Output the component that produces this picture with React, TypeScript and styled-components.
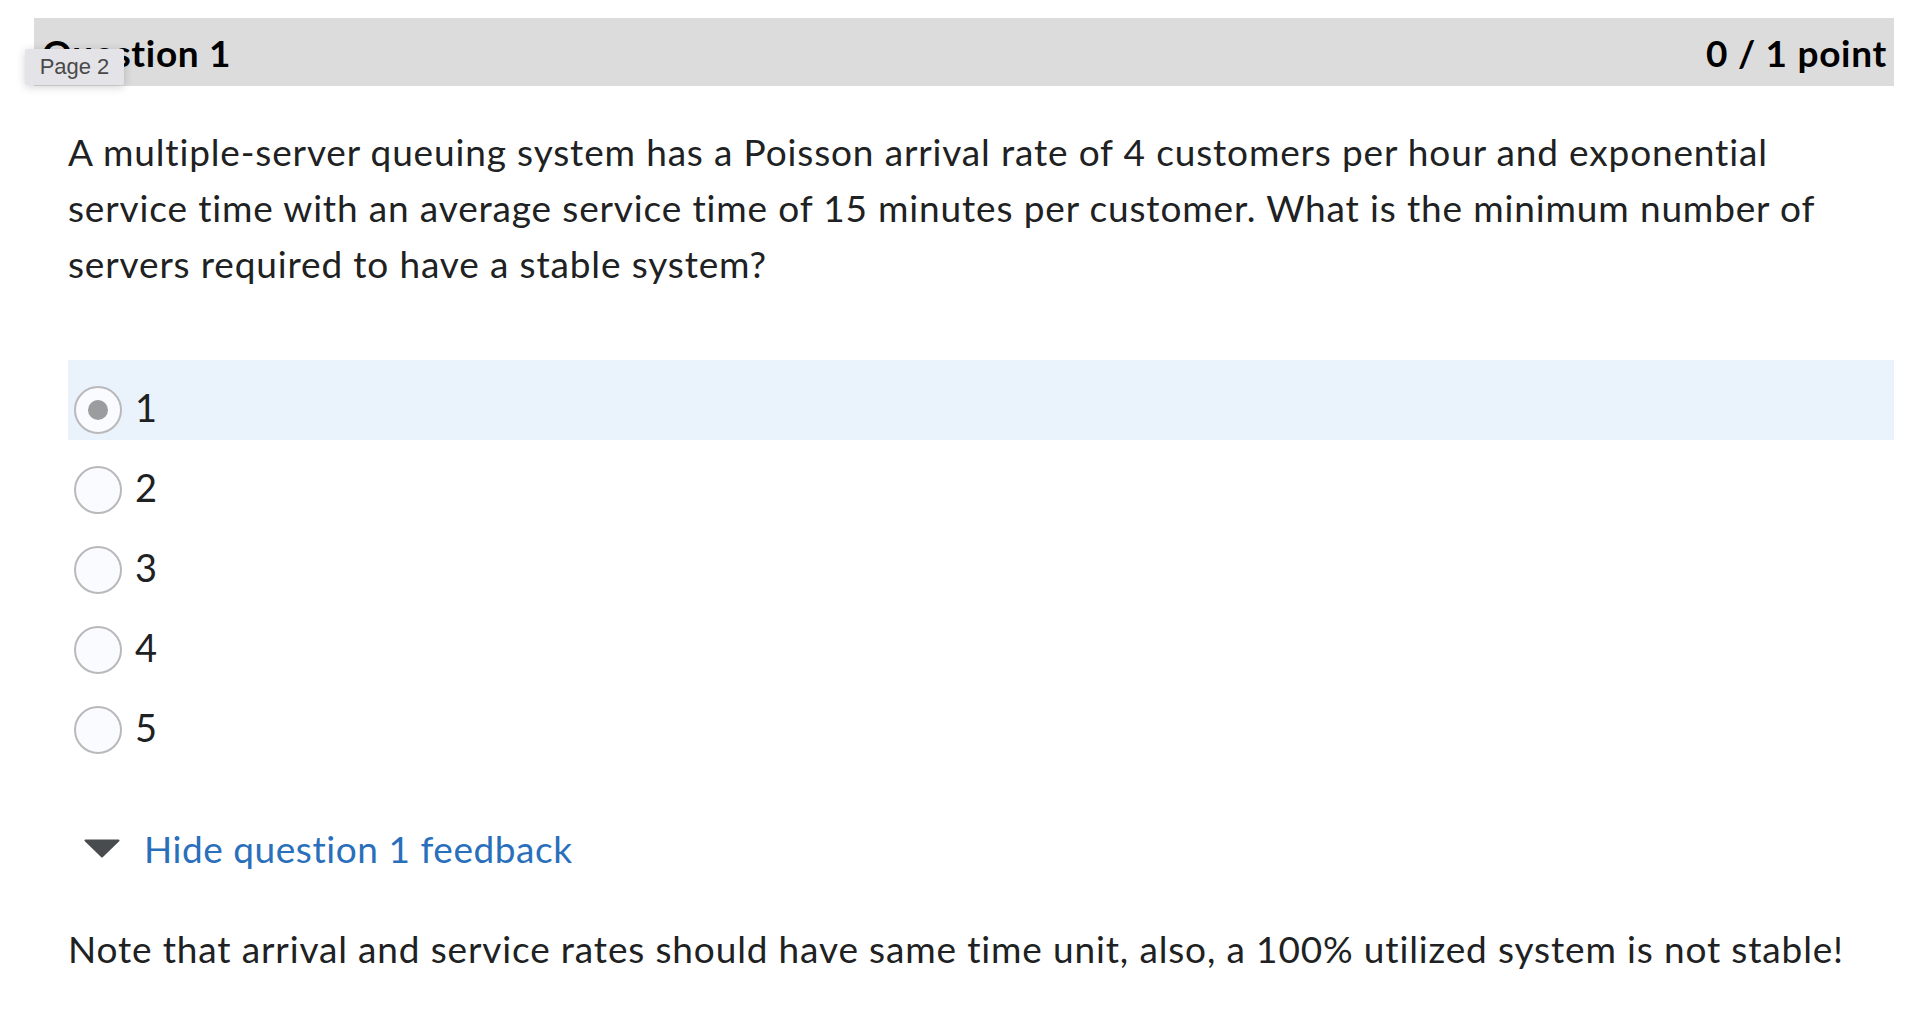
import React from "react";
import styled, { createGlobalStyle } from "styled-components";

const GlobalStyle = createGlobalStyle`
  html, body {
    margin: 0;
    padding: 0;
    background: #ffffff;
  }
  body {
    font-family: "Lato", "Noto Sans", sans-serif;
    color: #202122;
  }
`;

const Page = styled.div`
  position: relative;
  padding: 18px 12px 40px 34px;
`;

const Header = styled.div`
  display: flex;
  justify-content: space-between;
  align-items: center;
  height: 68px;
  padding: 0 7px 0 8px;
  background: #dcdcdc;
  font-family: "Lato", sans-serif;
  font-weight: 700;
  font-size: 37px;
  letter-spacing: 0.7px;
  color: #000;
`;

const PageTag = styled.div`
  position: absolute;
  left: 25px;
  top: 49px;
  width: 99px;
  height: 36px;
  display: flex;
  align-items: center;
  justify-content: center;
  background: #e4e3e8;
  border-radius: 2px;
  box-shadow: 0 2px 10px rgba(0, 0, 0, 0.18);
  font-family: "Liberation Sans", "Noto Sans", sans-serif;
  font-size: 22px;
  color: #494949;
`;

const Body = styled.div`
  padding-left: 34px;
`;

const Question = styled.p`
  margin: 38px 0 68px;
  padding-right: 20px;
  font-size: 37px;
  letter-spacing: 0.85px;
  line-height: 56px;
  color: #202122;
`;

const Options = styled.div`
  display: flex;
  flex-direction: column;
`;

const OptionRow = styled.label<{ $selected?: boolean }>`
  box-sizing: border-box;
  display: flex;
  align-items: center;
  gap: 13px;
  height: 80px;
  padding: 20px 0 0 6px;
  background: ${(p) => (p.$selected ? "#eaf2fb" : "transparent")};
  font-size: 38px;
  color: #202122;
`;

const OptionText = styled.span`
  margin-bottom: 6px;
`;

const Radio = styled.span<{ $checked?: boolean }>`
  box-sizing: border-box;
  width: 48px;
  height: 48px;
  border-radius: 50%;
  border: 2px solid #b9b9bb;
  background: #f9fbfe;
  display: flex;
  align-items: center;
  justify-content: center;

  &::after {
    content: "";
    display: ${(p) => (p.$checked ? "block" : "none")};
    width: 20px;
    height: 20px;
    border-radius: 50%;
    background: #9b9c9e;
  }
`;

const Toggle = styled.div`
  display: flex;
  align-items: center;
  gap: 24px;
  margin: 63px 0 0 16px;
  height: 50px;
`;

const ToggleLink = styled.a`
  font-size: 37px;
  letter-spacing: 0.55px;
  color: #2a6fbb;
  text-decoration: none;
`;

const Feedback = styled.p`
  margin: 48px 0 0;
  font-size: 37px;
  letter-spacing: 0.85px;
  line-height: 56px;
  color: #202122;
`;

const answers = ["1", "2", "3", "4", "5"];

export default function App() {
  return (
    <>
      <GlobalStyle />
      <Page>
        <Header>
          <span>Question 1</span>
          <span>0 / 1 point</span>
        </Header>
        <PageTag>Page 2</PageTag>
        <Body>
          <Question>
            A multiple-server queuing system has a Poisson arrival rate of 4
            customers per hour and exponential service time with an average
            service time of 15 minutes per customer. What is the minimum
            number of servers required to have a stable system?
          </Question>
          <Options>
            {answers.map((a, i) => (
              <OptionRow key={a} $selected={i === 0}>
                <Radio $checked={i === 0} />
                <OptionText>{a}</OptionText>
              </OptionRow>
            ))}
          </Options>
          <Toggle>
            <svg width="36" height="19" viewBox="0 0 36 19">
              <path d="M1.5 1.5 L34.5 1.5 L18 17.5 Z" fill="#494c4e" stroke="#494c4e" strokeWidth="2" strokeLinejoin="round" />
            </svg>
            <ToggleLink href="#">Hide question 1 feedback</ToggleLink>
          </Toggle>
          <Feedback>
            Note that arrival and service rates should have same time unit,
            also, a 100% utilized system is not stable!
          </Feedback>
        </Body>
      </Page>
    </>
  );
}
